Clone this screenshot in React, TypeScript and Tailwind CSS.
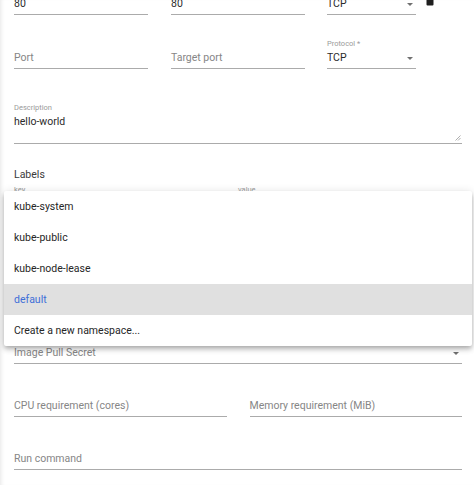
import React from "react";

function Arrow() {
  return (
    <span className="inline-block w-0 h-0 border-l-[3.5px] border-r-[3.5px] border-t-[3.5px] border-l-transparent border-r-transparent border-t-[#707070]" />
  );
}

function Field({
  text,
  placeholder,
  className = "",
  select,
  label,
}: {
  text?: string;
  placeholder?: string;
  className?: string;
  select?: boolean;
  label?: string;
}) {
  return (
    <div className={className}>
      {label !== undefined && (
        <div className="text-[7.5px] leading-[9px] h-[9px] text-[#9a9a9a] mb-[4px]">{label}</div>
      )}
      <div className="flex items-center justify-between border-b border-[#ababab] pb-[4px]">
        <span
          className={
            "block h-[12px] text-[10.5px] leading-[12px] " +
            (text ? "text-[#2b2b2b]" : "text-[#868686]")
          }
        >
          {text ?? placeholder}
        </span>
        {select && (
          <span className="mr-[3px] flex items-center">
            <Arrow />
          </span>
        )}
      </div>
    </div>
  );
}

const items = ["kube-system", "kube-public", "kube-node-lease", "default", "Create a new namespace..."];

export default function App() {
  return (
    <div
      className="relative w-[474px] h-[485px] overflow-hidden bg-white pl-[14px] pr-[12px] shadow-[inset_4px_0_4px_-3px_rgba(0,0,0,0.10)]"
      style={{ fontFamily: "Roboto, 'Noto Sans', sans-serif" }}
    >
      {/* Row 1 */}
      <div className="flex items-end -mt-[2px]">
        <Field text="80" className="w-[134px]" />
        <Field text="80" className="w-[134px] ml-[23px]" />
        <Field text="TCP" select className="w-[89px] ml-[22px]" />
        <svg className="self-start ml-[10px] mt-[2px]" width="8" height="6" viewBox="0 0 8 6">
          <path d="M0.5 0 H7.5 V4.5 Q7.5 5.5 6.5 5.5 H1.5 Q0.5 5.5 0.5 4.5 Z" fill="#1e1e1e" />
        </svg>
      </div>

      {/* Row 2 */}
      <div className="flex items-end mt-[24px]">
        <Field placeholder="Port" className="w-[134px]" />
        <Field placeholder="Target port" className="w-[134px] ml-[23px]" />
        <Field text="TCP" select label="Protocol *" className="w-[89px] ml-[22px]" />
      </div>

      {/* Description */}
      <div className="mt-[34px]">
        <div className="text-[7.5px] leading-[9px] text-[#9a9a9a]">Description</div>
        <div className="mt-[4px] border-b border-[#ababab] pb-[2px]">
          <div className="flex justify-between h-[25px]">
            <span className="text-[10.5px] leading-[12px] text-[#2b2b2b]">hello-world</span>
            <svg className="self-end mr-[1px]" width="6" height="6" viewBox="0 0 6 6">
              <path d="M0.5 5.5 L5.5 0.5 M3 5.5 L5.5 3" stroke="#9a9a9a" strokeWidth="0.8" />
            </svg>
          </div>
        </div>
      </div>

      {/* Labels */}
      <div className="mt-[25px] text-[10.5px] leading-[12px] text-[#3a3a3a]">Labels</div>
      <div className="flex mt-[4px] text-[7.5px] leading-[9px] text-[#9a9a9a]">
        <span className="w-[224px]">key</span>
        <span>value</span>
      </div>
      <div className="flex mt-[2px]">
        <Field placeholder="" className="w-[201px]" />
        <Field placeholder="" className="w-[201px] ml-[23px]" />
      </div>

      {/* Namespace field (covered by the open menu) */}
      <Field placeholder="" select label="" className="mt-[77px]" />

      {/* Image Pull Secret */}
      <Field placeholder="Image Pull Secret" select className="mt-[27px]" />

      {/* CPU / Memory */}
      <div className="grid grid-cols-2 gap-x-[23px] mt-[36px]">
        <Field placeholder="CPU requirement (cores)" />
        <Field placeholder="Memory requirement (MiB)" />
      </div>

      {/* Run command */}
      <Field placeholder="Run command" className="mt-[36px]" />

      {/* Dropdown menu overlay */}
      <div className="absolute top-[191px] left-[4px] w-[468px] h-[155px] bg-white rounded-[2px] shadow-[0_2px_4px_-1px_rgba(0,0,0,0.2),0_4px_5px_0_rgba(0,0,0,0.14),0_1px_10px_0_rgba(0,0,0,0.12)] overflow-hidden">
        {items.map((it) => (
          <div
            key={it}
            className={
              "h-[31px] leading-[31px] pl-[10px] text-[10.5px] " +
              (it === "default" ? "bg-[#e0e0e0] text-[#3e6fd8]" : "text-[#262626]")
            }
          >
            {it}
          </div>
        ))}
      </div>
    </div>
  );
}
